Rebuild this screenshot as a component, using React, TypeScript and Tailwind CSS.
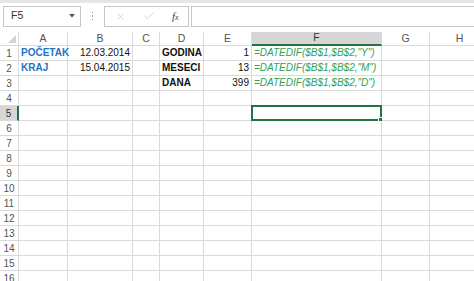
import { X, Check } from "lucide-react";

const COLS = [
  { key: "A", w: 49 },
  { key: "B", w: 65 },
  { key: "C", w: 27 },
  { key: "D", w: 44 },
  { key: "E", w: 48 },
  { key: "F", w: 130 },
  { key: "G", w: 48 },
  { key: "H", w: 60 },
];

type Cell = { text: string; cls: string };

const DATA: Record<string, Cell> = {
  A1: { text: "POČETAK", cls: "font-bold text-[#1f74c6]" },
  A2: { text: "KRAJ", cls: "font-bold text-[#1f74c6]" },
  B1: { text: "12.03.2014", cls: "text-right text-[#111]" },
  B2: { text: "15.04.2015", cls: "text-right text-[#111]" },
  D1: { text: "GODINA", cls: "font-bold text-[#111]" },
  D2: { text: "MESECI", cls: "font-bold text-[#111]" },
  D3: { text: "DANA", cls: "font-bold text-[#111]" },
  E1: { text: "1", cls: "text-right text-[#111]" },
  E2: { text: "13", cls: "text-right text-[#111]" },
  E3: { text: "399", cls: "text-right text-[#111]" },
  F1: { text: '=DATEDIF($B$1,$B$2,"Y")', cls: "italic text-[#30a158]" },
  F2: { text: '=DATEDIF($B$1,$B$2,"M")', cls: "italic text-[#30a158]" },
  F3: { text: '=DATEDIF($B$1,$B$2,"D")', cls: "italic text-[#30a158]" },
};

const ROWS = Array.from({ length: 16 }, (_, i) => i + 1);
const SEL_COL = "F";
const SEL_ROW = 5;

function Toolbar() {
  return (
    <div className="flex items-center h-[32px] pt-[4px] pb-[7px] pl-[3px] gap-0 border-t-[3px] border-[#e6e6e6] box-border">
      <div className="w-[78px] h-[21px] border border-[#c6c6c6] flex items-center justify-between pl-[7px] pr-[5px]">
        <span className="text-[10.5px] text-[#333]">F5</span>
        <svg width="6" height="4" viewBox="0 0 6 4"><path d="M0 0h6L3 3.5z" fill="#555" /></svg>
      </div>
      <div className="w-[23px] flex flex-col items-center gap-[2px]">
        <span className="w-[1.5px] h-[1.5px] bg-[#999]" />
        <span className="w-[1.5px] h-[1.5px] bg-[#999]" />
        <span className="w-[1.5px] h-[1.5px] bg-[#999]" />
      </div>
      <div className="w-[85px] h-[21px] border border-[#c6c6c6] flex items-center pl-[10px]">
        <X size={11} strokeWidth={1.3} className="text-[#b8b8b8]" />
        <Check size={12} strokeWidth={1.3} className="text-[#b8b8b8] ml-[17px]" />
        <span className="ml-[17px] text-[11px] italic text-[#444] font-['Liberation_Serif',serif] leading-none">
          f<span className="text-[8px]">x</span>
        </span>
      </div>
      <div className="ml-[2px] flex-1 h-[21px] border border-[#c6c6c6] border-r-0" />
    </div>
  );
}

export default function App() {
  return (
    <div className="w-[474px] h-[281px] overflow-hidden bg-white font-['Liberation_Sans',Arial,sans-serif] text-[10px] select-none">
      <Toolbar />
      <div className="flex h-[14px]">
        <div className="w-[19px] shrink-0 border-r border-b border-[#dadada] flex items-end justify-end pr-[2px] pb-[2px]">
          <svg width="8" height="8" viewBox="0 0 8 8"><path d="M8 0v8H0z" fill="#d4d4d4" /></svg>
        </div>
        {COLS.map(c => (
          <div
            key={c.key}
            style={{ width: c.w }}
            className={`shrink-0 border-r border-[#dadada] flex items-center justify-center text-[10.5px] ${
              c.key === SEL_COL ? "bg-[#d6d6d6] border-b-2 border-b-[#217346] text-[#333]" : "border-b text-[#555]"
            }`}
          >
            {c.key}
          </div>
        ))}
      </div>
      {ROWS.map(r => (
        <div key={r} className="flex h-[15px]">
          <div
            className={`w-[19px] shrink-0 border-b border-[#dadada] flex items-center justify-center text-[10px] ${
              r === SEL_ROW ? "bg-[#d6d6d6] border-r-2 border-r-[#217346] text-[#333]" : "border-r text-[#555]"
            }`}
          >
            {r}
          </div>
          {COLS.map(c => {
            const cell = DATA[`${c.key}${r}`];
            const selected = c.key === SEL_COL && r === SEL_ROW;
            return (
              <div
                key={c.key}
                style={{ width: c.w }}
                className={`relative shrink-0 border-r border-b border-[#dadada] leading-[14px] whitespace-nowrap px-[2px] ${cell ? cell.cls : ""}`}
              >
                {cell?.text}
                {selected && (
                  <div className="absolute -left-[1px] -top-[1px] -right-[1px] -bottom-[1px] border-2 border-[#217346]">
                    <span className="absolute -right-[3px] -bottom-[3px] w-[5px] h-[5px] bg-[#217346] border border-white" />
                  </div>
                )}
              </div>
            );
          })}
        </div>
      ))}
    </div>
  );
}
